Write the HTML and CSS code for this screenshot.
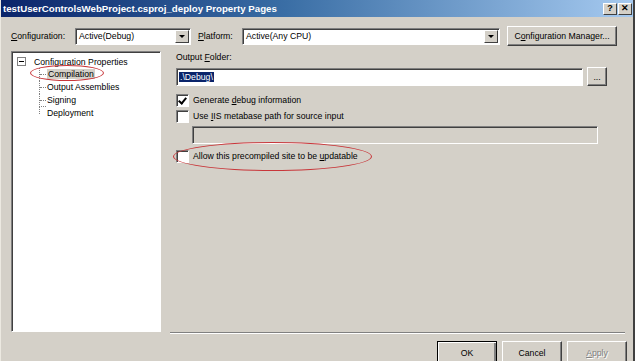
FILE: index.html
```html
<!DOCTYPE html>
<html lang="en">
<head>
    <meta charset="UTF-8">
    <title>testUserControlsWebProject.csproj_deploy Property Pages</title>
    <link rel="stylesheet" href="styles.css">
</head>
<body>
    <div class="window">
        <div class="titlebar">
            <span class="title">testUserControlsWebProject.csproj_deploy Property Pages</span>
            <div class="caption-buttons">
                <span class="cap-btn">?</span>
                <span class="cap-btn">&#x2715;</span>
            </div>
        </div>

        <div class="toolbar">
            <label class="lbl"><u>C</u>onfiguration:</label>
            <div class="combo combo-config">
                <span class="combo-text">Active(Debug)</span>
                <span class="combo-arrow"></span>
            </div>
            <label class="lbl lbl-platform"><u>P</u>latform:</label>
            <div class="combo combo-platform">
                <span class="combo-text">Active(Any CPU)</span>
                <span class="combo-arrow"></span>
            </div>
            <button class="btn btn-manager">C<u>o</u>nfiguration Manager...</button>
        </div>

        <div class="main">
            <div class="tree">
                <div class="tree-root">
                    <span class="expander"></span>
                    <span>Configuration Properties</span>
                </div>
                <ul class="tree-children">
                    <li><span class="selected-item">Compilation</span></li>
                    <li>Output Assemblies</li>
                    <li>Signing</li>
                    <li class="last">Deployment</li>
                </ul>
                <span class="mark mark-compilation"></span>
            </div>

            <div class="settings">
                <div class="field-label">Output <u>F</u>older:</div>
                <div class="folder-row">
                    <div class="textbox"><span class="selected-text">.\Debug\</span></div>
                    <button class="btn btn-browse">...</button>
                </div>

                <div class="check-row">
                    <span class="checkbox checked"></span>
                    <span>Generate <u>d</u>ebug information</span>
                </div>
                <div class="check-row">
                    <span class="checkbox"></span>
                    <span>Use <u>I</u>IS metabase path for source input</span>
                </div>
                <div class="textbox disabled-box"></div>
                <div class="check-row check-updatable">
                    <span class="checkbox"></span>
                    <span>Allow this precompiled site to be <u>u</u>pdatable</span>
                    <span class="mark mark-updatable"></span>
                </div>
            </div>
        </div>

        <div class="footer">
            <div class="separator"></div>
            <div class="buttons">
                <button class="btn btn-ok">OK</button>
                <button class="btn">Cancel</button>
                <button class="btn btn-disabled"><u>A</u>pply</button>
            </div>
        </div>
    </div>
</body>
</html>
```

FILE: styles.css
```css
body {
    margin: 0;
    font-family: "Liberation Sans", Arial, sans-serif;
    font-size: 8.7px;
    color: #000;
    background: #d4d0c8;
}

.window {
    width: 635px;
    height: 361px;
    box-sizing: border-box;
    background: #d4d0c8;
    border-left: 1px solid #ece9e1;
    border-right: 2px solid #404040;
    overflow: hidden;
}

/* title bar */
.titlebar {
    height: 17px;
    display: flex;
    align-items: center;
    justify-content: space-between;
    padding: 0 1px 0 2px;
    background: linear-gradient(90deg, #0a246a 0%, #3a6ea5 45%, #a6caf0 100%);
}

.title {
    color: #fff;
    font-weight: bold;
    font-size: 9.7px;
}

.caption-buttons {
    display: flex;
    gap: 1px;
}

.cap-btn {
    width: 14px;
    height: 12px;
    display: flex;
    align-items: center;
    justify-content: center;
    background: #d4d0c8;
    border: 1px solid;
    border-color: #fff #404040 #404040 #fff;
    font-size: 9px;
    font-weight: bold;
    line-height: 1;
    box-sizing: border-box;
}

/* configuration row */
.toolbar {
    display: flex;
    align-items: center;
    height: 20px;
    margin-top: 9px;
    padding-left: 10px;
}

.toolbar > * {
    flex-shrink: 0;
}

.lbl {
    width: 64px;
}

.lbl-platform {
    width: 44px;
    margin-left: 7px;
}

.combo {
    height: 17px;
    box-sizing: border-box;
    display: flex;
    align-items: center;
    justify-content: space-between;
    background: #fff;
    border: 1px solid;
    border-color: #808080 #fff #fff #808080;
    box-shadow: inset 1px 1px 0 #404040;
    padding: 0 1px 0 3px;
}

.combo-config {
    width: 116px;
}

.combo-platform {
    width: 258px;
}

.combo-arrow {
    width: 14px;
    height: 13px;
    box-sizing: border-box;
    background: #d4d0c8;
    border: 1px solid;
    border-color: #fff #404040 #404040 #fff;
    position: relative;
}

.combo-arrow::after {
    content: "";
    position: absolute;
    left: 3px;
    top: 4px;
    border-left: 3px solid transparent;
    border-right: 3px solid transparent;
    border-top: 3px solid #000;
}

.btn {
    font-family: inherit;
    font-size: 8.7px;
    background: #d4d0c8;
    border: 1px solid;
    border-color: #fff #404040 #404040 #fff;
    box-shadow: inset -1px -1px 0 #808080;
    padding: 0;
    color: #000;
}

.btn-manager {
    width: 110px;
    height: 20px;
    margin-left: 7px;
}

/* main area */
.main {
    display: flex;
    margin-top: 5px;
    height: 281px;
}

.tree {
    position: relative;
    width: 150px;
    margin-left: 10px;
    box-sizing: border-box;
    background: #fff;
    border: 1px solid;
    border-color: #808080 #fff #fff #808080;
    box-shadow: inset 1px 1px 0 #404040;
    padding: 2px 0 0 5px;
}

.tree-root {
    display: flex;
    align-items: center;
    height: 13px;
    margin-top: 1px;
}

.expander {
    width: 9px;
    height: 9px;
    box-sizing: border-box;
    border: 1px solid #808080;
    margin-right: 8px;
    position: relative;
}

.expander::after {
    content: "";
    position: absolute;
    left: 1px;
    top: 3px;
    width: 5px;
    height: 1px;
    background: #000;
}

.tree-children {
    list-style: none;
    margin: 0 0 0 22px;
    padding: 0;
}

.tree-children li {
    position: relative;
    height: 13px;
    line-height: 13px;
    padding-left: 7px;
    border-left: 1px dotted #808080;
}

.tree-children li.last {
    border-left-color: transparent;
}

.tree-children li::before {
    content: "";
    position: absolute;
    left: 0;
    top: 6px;
    width: 6px;
    border-top: 1px dotted #808080;
}

.tree-children li.last::before {
    left: -1px;
    top: -1px;
    height: 7px;
    border-left: 1px dotted #808080;
}

.selected-item {
    background: #d4d0c8;
    padding: 0 1px;
}

/* red annotation ellipses */
.mark {
    position: absolute;
    border: 1px solid #c8363a;
    border-radius: 50%;
    pointer-events: none;
}

.mark-compilation {
    left: 18px;
    top: 13px;
    width: 72px;
    height: 14px;
}

/* settings */
.settings {
    flex: 1;
    padding-left: 15px;
}

.field-label {
    height: 12px;
    line-height: 12px;
}

.folder-row {
    display: flex;
    align-items: center;
    margin-top: 4px;
}

.textbox {
    width: 407px;
    height: 18px;
    box-sizing: border-box;
    background: #fff;
    border: 1px solid;
    border-color: #808080 #fff #fff #808080;
    box-shadow: inset 1px 1px 0 #404040;
    padding: 3px 2px 0;
}

.selected-text {
    background: #0a246a;
    color: #fff;
    padding: 0 1px;
}

.btn-browse {
    width: 20px;
    height: 19px;
    margin-left: 4px;
    line-height: 10px;
}

.check-row {
    position: relative;
    display: flex;
    align-items: center;
    height: 16px;
}

.folder-row + .check-row {
    margin-top: 6px;
}

.checkbox {
    width: 13px;
    height: 13px;
    box-sizing: border-box;
    background: #fff;
    border: 1px solid;
    border-color: #808080 #fff #fff #808080;
    box-shadow: inset 1px 1px 0 #404040;
    margin-right: 4px;
    position: relative;
}

.checkbox.checked::after {
    content: "";
    position: absolute;
    left: 3px;
    top: 1px;
    width: 3px;
    height: 6px;
    border: solid #000;
    border-width: 0 2px 2px 0;
    transform: rotate(40deg);
}

.disabled-box {
    width: 406px;
    background: #d4d0c8;
    margin: 2px 0 4px 16px;
}

.mark-updatable {
    left: -3px;
    top: -6px;
    width: 197px;
    height: 27px;
}

/* footer */
.footer {
    padding: 0 8px 0 169px;
}

.separator {
    height: 0;
    border-top: 1px solid #808080;
    border-bottom: 1px solid #fff;
}

.buttons {
    display: flex;
    justify-content: flex-end;
    gap: 5px;
    margin-top: 7px;
    margin-right: -2px;
}

.buttons .btn {
    width: 60px;
    height: 23px;
}

.btn-ok {
    border: 1px solid #000;
    box-shadow: inset 1px 1px 0 #fff, inset -2px -2px 0 #808080;
}

.btn-disabled {
    color: #808080;
    text-shadow: 1px 1px 0 #fff;
}
```
